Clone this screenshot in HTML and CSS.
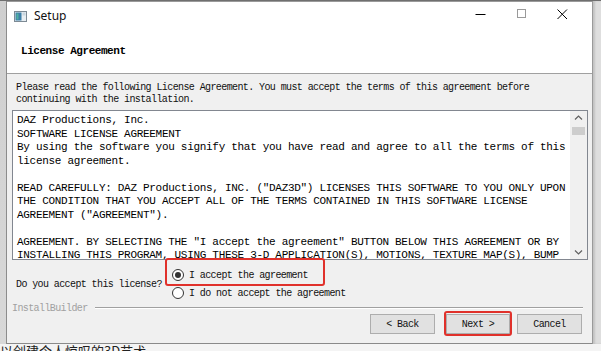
FILE: index.html
```html
<!DOCTYPE html>
<html>
<head>
<meta charset="utf-8">
<title>Setup</title>
<link rel="stylesheet" href="styles.css">
</head>
<body>
<div class="desk">
  <div class="side-left"></div>
  <div class="window">
    <div class="titlebar">
      <svg class="app-icon" width="13" height="11" viewBox="0 0 13 11">
        <rect x="0.5" y="0.5" width="12" height="10" fill="#e8eef2" stroke="#7d8a94"/>
        <rect x="1.5" y="1.5" width="6" height="8" fill="#3d7fa8"/>
        <rect x="2.5" y="2.5" width="2" height="6" fill="#4fb0a0"/>
        <rect x="8.5" y="1.5" width="3" height="3" fill="#c9d6df"/>
      </svg>
      <span class="title">Setup</span>
      <div class="controls">
        <span class="ctl"><svg width="11" height="11" viewBox="0 0 11 11"><path d="M0.5 5.5H10.5" stroke="#000" stroke-width="1"/></svg></span>
        <span class="ctl"><svg width="10" height="10" viewBox="0 0 10 10"><rect x="0.5" y="0.5" width="8" height="8" fill="none" stroke="#9a9a9a"/></svg></span>
        <span class="ctl"><svg width="11" height="11" viewBox="0 0 11 11"><path d="M0.5 0.5L10 10M10 0.5L0.5 10" stroke="#000" stroke-width="1"/></svg></span>
      </div>
    </div>
    <div class="header">License Agreement</div>
    <div class="body">
      <p class="intro">Please read the following License Agreement. You must accept the terms of this agreement before
continuing with the installation.</p>
      <div class="textbox">
        <div class="license">DAZ Productions, Inc.
SOFTWARE LICENSE AGREEMENT
By using the software you signify that you have read and agree to all the terms of this
license agreement.

READ CAREFULLY: DAZ Productions, INC. ("DAZ3D") LICENSES THIS SOFTWARE TO YOU ONLY UPON
THE CONDITION THAT YOU ACCEPT ALL OF THE TERMS CONTAINED IN THIS SOFTWARE LICENSE
AGREEMENT ("AGREEMENT").

AGREEMENT. BY SELECTING THE "I accept the agreement" BUTTON BELOW THIS AGREEMENT OR BY
INSTALLING THIS PROGRAM, USING THESE 3-D APPLICATION(S), MOTIONS, TEXTURE MAP(S), BUMP</div>
        <div class="scrollbar">
          <svg class="arrow" width="17" height="14" viewBox="0 0 17 14"><path d="M5 8.5L8.5 5L12 8.5" fill="none" stroke="#606060" stroke-width="1.2"/></svg>
          <div class="thumb"></div>
          <div class="track"></div>
          <svg class="arrow" width="17" height="14" viewBox="0 0 17 14"><path d="M5 5.5L8.5 9L12 5.5" fill="none" stroke="#606060" stroke-width="1.2"/></svg>
        </div>
      </div>
      <div class="accept">
        <span class="question">Do you accept this license?</span>
        <div class="radios">
          <label class="radio checked highlight"><span class="dot"></span>I accept the agreement</label>
          <label class="radio"><span class="dot"></span>I do not accept the agreement</label>
        </div>
      </div>
      <div class="brand"><span>InstallBuilder</span><span class="rule"></span></div>
      <div class="buttons">
        <button class="btn back">&lt; Back</button>
        <button class="btn next highlight-btn">Next &gt;</button>
        <button class="btn cancel">Cancel</button>
      </div>
    </div>
  </div>
  <div class="side-right"></div>
</div>
<div class="below"><span class="below-text">以创建令人惊叹的3D艺术</span></div>
</body>
</html>
```

FILE: styles.css
```css
* { box-sizing: border-box; }
html, body { margin: 0; padding: 0; }
body {
  width: 601px;
  height: 351px;
  overflow: hidden;
  background: #d6d6d6;
  font-family: "Liberation Mono", monospace;
}

.desk {
  display: flex;
  height: 344px;
  padding-top: 1px;
  background: #6f6f6f;
}
.side-left {
  width: 7px;
  background: linear-gradient(#cfcfcf, #d8d8d8);
  border-right: 1px solid #8c8c8c;
}
.side-right {
  flex: 1;
  background: #dedede;
  border-left: 1px solid #9a9a9a;
  box-shadow: inset 2px 0 2px rgba(0,0,0,0.12);
}

.window {
  width: 585px;
  display: flex;
  flex-direction: column;
  background: #f0f0f0;
  border-top: 1px solid #9a9a9a;
  border-bottom: 1px solid #8a8a8a;
}

.titlebar {
  height: 27px;
  background: #fff;
  display: flex;
  align-items: center;
  padding-left: 7px;
}
.app-icon { display: block; margin-top: 1px; }
.title {
  margin-left: 7px;
  font-family: "Noto Sans", "Open Sans", sans-serif;
  font-size: 12px;
  color: #111;
}
.controls {
  margin-left: auto;
  display: flex;
  height: 100%;
  padding-right: 9px;
}
.ctl {
  width: 41px;
  display: flex;
  align-items: center;
  justify-content: center;
  padding-bottom: 3px;
}

.header {
  height: 45px;
  background: #fff;
  padding-left: 14px;
  display: flex;
  align-items: center;
  padding-bottom: 1px;
  font-weight: bold;
  font-size: 11px;
  letter-spacing: -0.45px;
  color: #000;
  border-bottom: 1px solid #a0a0a0;
}

.body {
  flex: 1;
  display: flex;
  flex-direction: column;
  padding-top: 8px;
}
.intro {
  margin: 0 0 4px 9px;
  white-space: pre;
  font-size: 10px;
  letter-spacing: -0.6px;
  line-height: 12px;
  height: 24px;
  color: #111;
}

.textbox {
  margin-left: 5px;
  width: 576px;
  height: 150px;
  display: flex;
  background: #fff;
  border: 1px solid #828790;
}
.license {
  flex: 1;
  overflow: hidden;
  white-space: pre;
  padding: 3px 0 0 4px;
  font-size: 11px;
  letter-spacing: -0.3px;
  line-height: 13.5px;
  color: #000;
}
.scrollbar {
  width: 17px;
  background: #f0f0f0;
  display: flex;
  flex-direction: column;
}
.arrow { display: block; }
.thumb {
  margin: 2px 2px 0;
  height: 8px;
  background: #cdcdcd;
}
.track { flex: 1; }

.accept {
  margin-top: 6px;
  height: 36px;
  display: flex;
  align-items: center;
  padding-left: 9px;
  font-size: 10px;
  letter-spacing: -0.6px;
  color: #111;
}
.question { width: 156px; padding-top: 1px; }
.radios { display: flex; flex-direction: column; }
.radio {
  height: 18px;
  display: flex;
  align-items: center;
  position: relative;
}
.dot {
  width: 12px;
  height: 12px;
  border: 1px solid #333;
  border-radius: 50%;
  background: #fff;
  margin-right: 5px;
  display: flex;
  align-items: center;
  justify-content: center;
}
.checked .dot::after {
  content: "";
  width: 6px;
  height: 6px;
  border-radius: 50%;
  background: #333;
}
.highlight::after {
  content: "";
  position: absolute;
  left: -7px;
  top: -8px;
  width: 156px;
  bottom: -2px;
  border: 2px solid #e0312b;
  border-radius: 3px;
}

.brand {
  height: 12px;
  display: flex;
  align-items: center;
  padding-left: 5px;
  padding-right: 9px;
  font-size: 10px;
  letter-spacing: -0.6px;
  color: #a0a0a0;
}
.rule {
  flex: 1;
  margin-left: 7px;
  height: 2px;
  border-top: 1px solid #a0a0a0;
  border-bottom: 1px solid #fff;
}

.buttons {
  height: 28px;
  display: flex;
  justify-content: flex-end;
  padding: 0 10px 8px 0;
}
.btn {
  width: 65px;
  height: 20px;
  background: #e1e1e1;
  border: 1px solid #adadad;
  font-family: "Liberation Mono", monospace;
  font-size: 10px;
  letter-spacing: -0.6px;
  color: #111;
  padding: 0;
}
.next { margin-left: 11px; width: 64px; position: relative; }
.cancel { margin-left: 7px; }
.highlight-btn::after {
  content: "";
  position: absolute;
  left: -3px;
  right: -3px;
  top: -4px;
  bottom: -3px;
  border: 2px solid #e0312b;
  border-radius: 3px;
}

.below {
  height: 7px;
  overflow: hidden;
  background: #f4f4f4;
}
.below-text {
  display: block;
  margin-top: -1px;
  font-family: "Noto Sans CJK SC", sans-serif;
  font-size: 13px;
  line-height: 16px;
  color: #222;
}
```
